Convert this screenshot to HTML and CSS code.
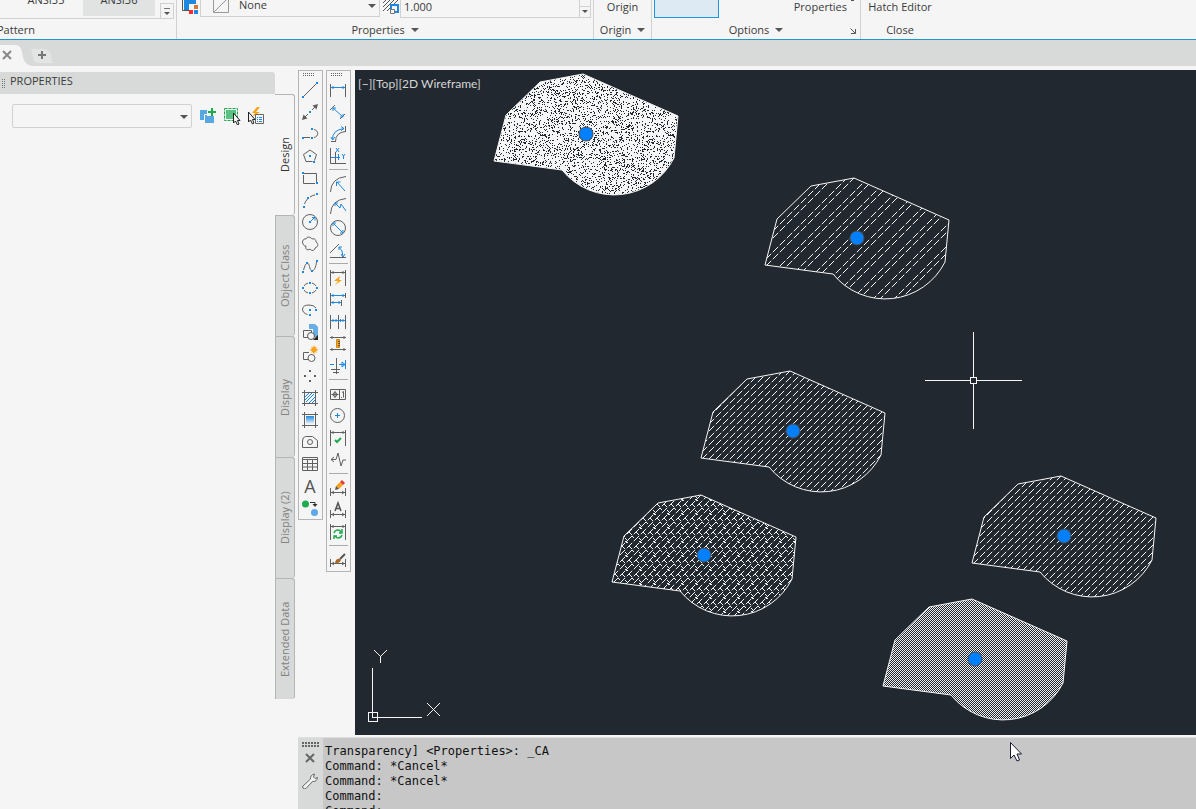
FILE: index.html
```html
<!DOCTYPE html>
<html lang="en">
<head>
<meta charset="utf-8">
<title>Hatch Editor</title>
<link rel="stylesheet" href="styles.css">
</head>
<body>
<header class="ribbon">
  <section class="panel panel-pattern">
    <div class="panel-row gallery">
      <button class="swatch">ANSI35</button>
      <button class="swatch swatch-hover">ANSI36</button>
      <button class="gallery-more" aria-label="More patterns"><i class="more-bar"></i><i class="caret caret-small"></i></button>
    </div>
    <h2 class="panel-title">Pattern</h2>
  </section>
  <section class="panel panel-properties">
    <div class="panel-row fields">
      <svg class="field-icon" width="18" height="18"><path fill="#1e88e0" d="M3 0h12v14H3z"/><path fill="none" stroke="#555" d="M1.500 0v14.500h8"/><path fill="#f5f5f5" d="M8 8h9v9H8z"/><path fill="#ff2a2a" d="M8 14h4v4H8z"/><path fill="#d57735" d="M13 9h4v4h-4z"/><path fill="#1e88e0" d="M13 14h4v4h-4z"/></svg>
      <label class="combo combo-color"><svg class="combo-none" width="16" height="16"><path fill="none" stroke="#999" d="M.5.5h15v15H.5zM1 15 15 1"/></svg>
        <select aria-label="Background color"><option>None</option></select></label>
      <svg class="field-icon" width="18" height="18"><path stroke="#555" d="M1 7 7 1M1 11 11 1M1 15 15 1M5 15 16 4"/><path fill="#f5f5f5" stroke="#1e88e0" stroke-width="2" d="M9 9h7v7H9z"/><path fill="#f5f5f5" stroke="#777" d="M8.500 13.500h4v4h-4z"/></svg>
      <div class="spin"><input type="text" value="1.000" aria-label="Hatch pattern scale"><span class="spin-buttons"><button aria-label="Increase"><i class="caret caret-up"></i></button><button aria-label="Decrease"><i class="caret caret-small"></i></button></span></div>
    </div>
    <h2 class="panel-title">Properties <i class="caret"></i></h2>
  </section>
  <section class="panel panel-origin">
    <div class="panel-row"><button class="big">Origin</button></div>
    <h2 class="panel-title">Origin <i class="caret"></i></h2>
  </section>
  <section class="panel panel-options">
    <div class="panel-row options-row">
      <button class="associative" aria-label="Associative"></button>
      <button class="big match">Properties<i class="match-caret"></i></button>
    </div>
    <h2 class="panel-title">Options <i class="caret"></i><button class="launcher" aria-label="Hatch settings"><svg width="6" height="6"><path fill="none" stroke="#555" d="M.5.5 5 5M5.500 1v4.500H1"/></svg></button></h2>
  </section>
  <section class="panel panel-close">
    <div class="panel-row"><button class="big">Hatch Editor</button></div>
    <h2 class="panel-title">Close</h2>
  </section>
</header>

<nav class="doc-tabs" aria-label="Drawings">
  <svg class="tab-shapes" width="60" height="26"><path fill="#f5f5f5" d="M0 5h15q6 0 7 7 1 9 5 12 3 2 6 2H0z"/><path fill="#e3e5e4" d="M31 9h13q6 0 7 6 0 6 2 8H39q-5 0-6-6-1-6-2-8z"/></svg>
  <button class="tab-button" aria-label="Close drawing"><svg width="10" height="10"><path stroke="#888" stroke-width="2" d="m1 1 8 8M9 1 1 9"/></svg></button>
  <button class="tab-button tab-new" aria-label="New drawing"><svg width="10" height="10"><path stroke="#777" stroke-width="2" d="M5 1v8M1 5h8"/></svg></button>
</nav>

<main class="workspace">
  <aside class="palette">
    <header class="palette-head"><i class="palette-grip"></i>PROPERTIES</header>
    <div class="palette-main">
      <div class="palette-body">
        <label class="combo combo-object"><select aria-label="Selected object"><option></option></select></label>
        <button class="palette-tool" aria-label="Toggle PICKADD"><svg width="18" height="18"><path fill="#56a8e2" d="M1 3h11v10H1z"/><path fill="#56a8e2" stroke="#f5f5f5" d="M5.500 7.500h10v9h-10z"/><path fill="#f5f5f5" d="M8 0h9v9H8z"/><path stroke="#17ad4b" stroke-width="2" d="M13 1v8M9 5h8"/></svg></button>
        <button class="palette-tool" aria-label="Select objects"><svg width="18" height="18"><path fill="#5bc183" d="M3 3h10v9H3z"/><path fill="none" stroke="#17ad4b" stroke-dasharray="3 1" d="M1.500 1.500h13v12h-13z"/><path fill="#f5f5f5" stroke="#222" d="M10.500 6v10l2-2 2 4 1.500-1-1.500-3.500H17z"/></svg></button>
        <button class="palette-tool" aria-label="Quick select"><svg width="18" height="18"><path fill="#f7a31c" d="m10 0-5 6h3L5 10l8-5h-4l4-5z"/><path fill="#f5f5f5" stroke="#666" d="M8.500 7.500h8v9h-8z"/><path stroke="#1e88e0" d="M10 10.500h1m1 0h3m-5 2h1m1 0h3m-5 2h1m1 0h3"/><path fill="#f5f5f5" stroke="#222" d="M1.500 5v10l2-2 2 4 1.500-1-1.500-3.500H8z"/></svg></button>
      </div>
      <div class="side-tabs" role="tablist">
        <button class="side-tab side-tab-active" role="tab" aria-selected="true">Design</button>
        <button class="side-tab" role="tab">Object Class</button>
        <button class="side-tab" role="tab">Display</button>
        <button class="side-tab" role="tab">Display (2)</button>
        <button class="side-tab" role="tab">Extended Data</button>
      </div>
    </div>
  </aside>

  <div class="stage">
    <div class="upper">
      <div class="toolbar" role="toolbar" aria-label="Draw">
        <i class="toolbar-grip"></i>
        <button aria-label="Line"><svg viewBox="0 0 16 16"><path class="g" d="M2 14 14 2"/><path class="b" d="M0 14h2v2H0zM14 0h2v2h-2z"/></svg></button>
        <button aria-label="Construction line"><svg viewBox="0 0 16 16"><path class="g" d="m2 14 4-4m4-4 4-4"/><path class="gf" d="m16 0-1.500 5.500-4-4zM0 16l1.500-5.500 4 4z"/><path class="b" d="M7 7h2v2H7z"/></svg></button>
        <button aria-label="Polyline"><svg viewBox="0 0 16 16"><path class="g" d="M2 11.500h6m4-8c5 1 5 7 0 8"/><path class="b" d="M0 11h2v2H0zM9 2h2v2H9zM9 11h2v2H9z"/></svg></button>
        <button aria-label="Polygon"><svg viewBox="0 0 16 16"><path class="g" d="M10.500 13.500H4L1.500 6.500 8 2l6.500 4.500-2 6"/><path class="b" d="M7 7h2v2H7zM11 13h2v2h-2z"/></svg></button>
        <button aria-label="Rectangle"><svg viewBox="0 0 16 16"><path class="g" d="M2 3.500h12.500V12M13 13.500H1.500V5"/><path class="b" d="M0 2h2v2H0zM14 12h2v2h-2z"/></svg></button>
        <button aria-label="Arc"><svg viewBox="0 0 16 16"><path class="g" d="M2.500 12q1-3 3-5M8 5q3-2 5-2"/><path class="b" d="M1 14h2v2H1zM5 5h2v2H5zM14 1h2v2h-2z"/></svg></button>
        <button aria-label="Circle"><svg viewBox="0 0 16 16"><circle class="g" cx="8" cy="8" r="7.500"/><path class="bs" d="M9 7 13 3M10 3.500h3v3"/><path class="b" d="M7 7h2v2H7z"/></svg></button>
        <button aria-label="Revision cloud"><svg viewBox="0 0 16 16"><path class="g" d="M2 9C-1 7 1 2 4 3c1-3 5-2 6 0 3-1 4 1 4 3 3 2 2 5-1 6 0 3-4 3-5 1-3 2-5 0-4-3-1 0-2 0-2-1z"/></svg></button>
        <button aria-label="Spline"><svg viewBox="0 0 16 16"><path class="g" d="M1.500 12Q3 6 5 5c3 0 2 7 5 8 2 0 4-4 4.500-9"/><path class="b" d="M0 13h2v2H0zM4 4h2v2H4zM9 12h2v2H9zM14 2h2v2h-2z"/></svg></button>
        <button aria-label="Ellipse"><svg viewBox="0 0 16 16"><path class="g" d="M2 6q1-2 4-3m4 0q3 1 4 3m0 4q-1 2-4 3m-4 0q-3-1-4-3"/><path class="b" d="M7 2h2v2H7zM14 7h2v2h-2zM7 12h2v2H7zM0 7h2v2H0z"/></svg></button>
        <button aria-label="Ellipse arc"><svg viewBox="0 0 16 16"><path class="g" d="M14 6Q12 3 7 3 1 3 .5 7q0 4 5 5.500"/><path class="b" d="M7 7h2v2H7zM13 7h2v2h-2zM7 12h2v2H7z"/></svg></button>
        <button aria-label="Insert block"><svg viewBox="0 0 16 16"><path fill="#67aee5" d="M7 0h6l3 3v10H7z"/><path fill="#f5f5f5" d="M0 5h11v10H0z"/><path class="g" d="M1.500 6.500h8v7h-8z"/><circle cx="9" cy="12" r="3.500" fill="#f5f5f5" stroke="#555"/><path fill="#222" d="m16 11v5h-5z"/></svg></button>
        <button aria-label="Create block"><svg viewBox="0 0 16 16"><path class="g" d="M7 6.500H1.500v7H7M9.500 8v1"/><circle class="g" cx="9.500" cy="12" r="3.500"/><path fill="#f7a31c" d="m12-1 1 2.500 2-1-1 2L16.500 4 14 5l1 2-2-1-1 2.500L11 6 9 7l1-2-2.500-1L10 2.500 9 .5l2 1z"/></svg></button>
        <button aria-label="Multiple points"><svg viewBox="0 0 16 16"><path class="gf" d="M7 2h2v2H7zM2 7h2v2H2zM12 7h2v2h-2zM7 12h2v2H7z"/></svg></button>
        <button aria-label="Hatch"><svg viewBox="0 0 16 16"><path class="bs" d="m3 7 4-4M3 10l7-7M4 12l8-8M7 13l6-6M10 13l3-3"/><path class="g" d="M0 2.500h16M0 13.500h16M2.500 0v16M13.500 0v16"/></svg></button>
        <button aria-label="Gradient"><svg viewBox="0 0 16 16"><defs><linearGradient id="fade" x2="0" y2="1"><stop stop-color="#1e88e0"/><stop offset="1" stop-color="#f5f5f5"/></linearGradient></defs><path fill="url(#fade)" d="M4 4h8v8H4z"/><path class="g" d="M0 2.500h16M0 13.500h16M2.500 0v16M13.500 0v16"/></svg></button>
        <button aria-label="Region"><svg viewBox="0 0 16 16"><path class="g" d="M.5 13.500V7q0-4 3-4.500h7l5 4v7z"/><circle class="g" cx="8" cy="8" r="2.500"/></svg></button>
        <button aria-label="Table"><svg viewBox="0 0 16 16"><path class="g" d="M.5 1.500h15v13H.5zM.5 3.500h15M.5 7.500h15M.5 11h15M5.500 4v10M10.500 4v10"/></svg></button>
        <button aria-label="Text" class="letter">A</button>
        <button aria-label="Add selected"><svg viewBox="0 0 16 16"><circle cx="3.500" cy="4" r="3.500" fill="#1cac4c"/><circle cx="12.500" cy="12.500" r="3.500" fill="#5da9e8"/><path stroke="#333" fill="none" d="M8 2.500h5V5"/><path fill="#333" d="M10.500 4h5L13 7z"/></svg></button>
      </div>
      <div class="toolbar" role="toolbar" aria-label="Dimension">
        <i class="toolbar-grip"></i>
        <button aria-label="Linear"><svg viewBox="0 0 16 16"><path class="g" d="M.5 2v13M15.500 2v13"/><path class="bs" d="M1 5.500h14M3 4v3M13 4v3"/></svg></button>
        <button aria-label="Aligned"><svg viewBox="0 0 16 16"><path class="g" d="m0 6 5-5M10 15l5-5"/><path class="bs" d="m3 4 10 9M3 7V4h3M10 13h3v-3"/></svg></button>
        <button aria-label="Arc length"><svg viewBox="0 0 16 16"><path class="g" d="M5.500 15.500q0-9 10-10M1 15.500h5M15.500 0v6"/><path class="bs" d="M2.500 14Q2 4 14 2.500M1 11l1.500 3L5 11M11 .5l3 2-3 2"/></svg></button>
        <button aria-label="Ordinate"><svg viewBox="0 0 16 16"><path class="g" d="M.5 0v15.500H16M5.500 4v11"/><path class="bs" d="M1 9.500h9M8.500 6v6M6 0l3 4m0-4L6 4M12 6l1.500 2L15 6m-1.500 2v3"/></svg></button>
        <hr>
        <button aria-label="Radius"><svg viewBox="0 0 16 16"><path class="g" d="M.5 16Q1 2 16 .5"/><path class="bs" d="m7 6 8 9M6.500 10V6h4"/></svg></button>
        <button aria-label="Jogged"><svg viewBox="0 0 16 16"><path class="g" d="M.5 16Q1 2 16 .5"/><path class="bs" d="m5 5 5 5 1-4 5 7M5 8V5h3"/></svg></button>
        <button aria-label="Diameter"><svg viewBox="0 0 16 16"><circle class="g" cx="8" cy="8" r="7.500"/><path class="bs" d="m3 3 10 10M3 6V3h3M10 13h3v-3"/></svg></button>
        <button aria-label="Angular"><svg viewBox="0 0 16 16"><path class="g" d="m0 11 9-9M0 15.500h16"/><path class="bs" d="M9 5q4 3 4 10M12 5H9v3M11 12l2 3 2-3"/></svg></button>
        <hr>
        <button aria-label="Quick dimension"><svg viewBox="0 0 16 16"><path class="g" d="M.5 0v16M15.500 0v16M1 2.500h14M3 1v3M13 1v3"/><path fill="#f7a31c" d="m10 6-6 5h4l-3 4 7-5H9z"/></svg></button>
        <button aria-label="Baseline"><svg viewBox="0 0 16 16"><path class="g" d="M.5 1v13M15.500 1v5M11.500 8v6"/><path class="bs" d="M1 3.500h14M1 10.500h10M3 2v3M13 2v3M3 9v3M9 9v3"/></svg></button>
        <button aria-label="Continue"><svg viewBox="0 0 16 16"><path class="g" d="M.5 1v14M8.500 1v14M15.500 1v14"/><path class="bs" d="M1 6.500h14M3 5v3M6 5v3M10.500 5v3M13 5v3"/></svg></button>
        <button aria-label="Dimension space"><svg viewBox="0 0 16 16"><path class="g" d="M0 1.500h16M0 13.500h16M2 0v3M14 0v3M2 12v3M14 12v3"/><path fill="#f7a31c" stroke="#d58612" d="M6.500 3.500h3v8h-3z"/><path stroke="#555" d="M8 5.500h2M8 7.500h2M8 9.500h2"/></svg></button>
        <button aria-label="Dimension break"><svg viewBox="0 0 16 16"><path class="g" d="M6.500 0v16M1 11.500h9M3 14.500h6"/><path class="bs" d="M0 6.500h4m5 0h6M12 4l3 2.500L12 9zM15.500 2v9"/></svg></button>
        <hr>
        <button aria-label="Tolerance"><svg viewBox="0 0 16 16"><path class="g" d="M.5 3.500h15v10H.5zM9.500 4v9"/><circle class="g" cx="5" cy="8.500" r="2"/><path class="g" d="M1.500 8.500h7M5 5v7M11 11.500h1M12 6.500l1.500-1v6"/></svg></button>
        <button aria-label="Center mark"><svg viewBox="0 0 16 16"><circle class="g" cx="7.500" cy="7.500" r="7"/><path class="bs" d="M5 7.500h5M7.500 5v5"/></svg></button>
        <button aria-label="Inspection"><svg viewBox="0 0 16 16"><path class="g" d="M.5 0v16M15.500 0v16M1 2.500h14M3 1v3M13 1v3"/><path fill="none" stroke="#1cac4c" stroke-width="2" d="m5 10 2 2 4-4"/></svg></button>
        <button aria-label="Jogged linear"><svg viewBox="0 0 16 16"><path class="g" d="M1 7.500h5L8 1l3 13 2-6h3M4 5 1 7.500 4 10"/></svg></button>
        <hr>
        <button aria-label="Dimension edit"><svg viewBox="0 0 16 16"><path class="g" d="M.5 8v8M15.500 8v8M1 12.500h14M4 11l-2 1.500L4 14M12 11l2 1.500-2 1.500"/><path fill="#f7a31c" d="m6 6 4-4 3 3-4 4z"/><path fill="#e43b36" d="m10 2 2-2 3 3-2 2z"/><path fill="#555" d="m6 6 3 3-4 1z"/></svg></button>
        <button aria-label="Dimension text edit"><svg viewBox="0 0 16 16"><path class="g" d="M.5 8v8M15.500 8v8M1 12.500h14M4 11l-2 1.500L4 14M12 11l2 1.500-2 1.500"/><path fill="none" stroke="#555" stroke-width="1.500" d="m5 9 3-8 3 8M6 6.500h4"/></svg></button>
        <button aria-label="Dimension update"><svg viewBox="0 0 16 16"><path class="g" d="M.5 0v16M15.500 0v16M1 2.500h14M3 1v3M13 1v3"/><path fill="none" stroke="#1cac4c" stroke-width="1.500" d="M4 9q1-3 4-3 2 0 3 2M12 5v4H9M12 11q-1 3-4 3-2 0-3-2M4 15v-3h3"/></svg></button>
        <hr>
        <button aria-label="Dimension style"><svg viewBox="0 0 16 16"><path class="g" d="M.5 7v8M15.500 7v8M1 11.500h14M4 10l-2 1.500L4 13M12 10l2 1.500-2 1.500"/><path fill="#a86a24" d="M5 11q1-5 5-4l1 1q-2 4-6 3z"/><path stroke="#555" stroke-width="2" d="m10 7 5-5"/></svg></button>
      </div>

      <div class="canvas">
        <svg class="model" shape-rendering="crispEdges" role="img" aria-label="Model space">
          <defs>
            <path id="region" d="M-3-60-46-52-80-19-92 27-24 36A67 67 0 0 0 88 24L92-18Z"/>
            <pattern id="sand" width="128" height="128" patternUnits="userSpaceOnUse"><path fill="#f5f5f5" d="M0 0h128v128H0z"/><path id="specks" fill="#212830"/></pattern>
            <pattern id="pairs" width="21" height="21" patternUnits="userSpaceOnUse"><path class="trace" d="M-1 22 22-1M-1 15 15-1M13 22l9-9"/><path class="dash" stroke-dasharray="7 3" d="M0 21 21 0M0 14 14 0M14 21l7-7"/></pattern>
            <pattern id="lines" width="14" height="14" patternUnits="userSpaceOnUse"><path class="trace" d="M-1 15 15-1M-1 8 8-1M6 15l9-9"/><path class="dash" stroke-dasharray="7 3" d="M0 14 14 0"/><path class="dash" d="M0 7l5-5M7 14l5-5"/></pattern>
            <pattern id="basket" width="14" height="14" patternUnits="userSpaceOnUse"><path class="trace" d="M-1 15 15-1M-1 8 8-1M6 15l9-9"/><path class="dash" d="m0 14 5-5M7 7l5-5M0 7l5-5M7 14l5-5M2 5l3 3M9 5l3 3M5 11l3 3M5 0l3 2M12 9l2 2"/></pattern>
            <pattern id="check" width="2" height="2" patternUnits="userSpaceOnUse"><path fill="#f0f0f0" d="M0 0h1v1H0zM1 1h1v1H1z"/></pattern>
          </defs>
          <g class="hatch" transform="translate(231 64)"><use href="#region" fill="url(#sand)"/><circle r="7"/></g>
          <g class="hatch" transform="translate(502 168)"><use href="#region" fill="url(#pairs)"/><circle r="7"/></g>
          <g class="hatch" transform="translate(438 361)"><use href="#region" fill="url(#lines)"/><circle r="7"/></g>
          <g class="hatch" transform="translate(349 485)"><use href="#region" fill="url(#basket)"/><circle r="7"/></g>
          <g class="hatch" transform="translate(709 466)"><use href="#region" fill="url(#lines)"/><circle r="7"/></g>
          <g class="hatch" transform="translate(620 589)"><use href="#region" fill="url(#check)"/><circle r="7"/></g>
          <path class="w" d="M570 310.500h45M622 310.500h45M618.500 262v45M618.500 314v45M615.500 307.500h6v6h-6z"/>
          <path class="w" d="M17.500 598v49.500H67M13.500 642.500h9v9h-9z"/>
          <path class="w" d="m19 580 6.500 6.500L32 580M25.500 586.500v6.500M72 633l13 13M85 633l-13 13"/>
        </svg>
        <div class="view-label">[−][Top][2D Wireframe]</div>
      </div>
    </div>

    <section class="command" aria-label="Command line">
      <div class="command-side">
        <i class="command-grip"></i>
        <button aria-label="Close command line"><svg width="10" height="10"><path stroke="#666" stroke-width="2" d="m1 1 8 8M9 1 1 9"/></svg></button>
        <button aria-label="Customize"><svg width="16" height="16"><path fill="#f0f0f0" stroke="#666" d="M1 13 8.500 6Q8 2 12.500 1l-1 3L13 5.500l2.500-1Q15 9 10.500 8.500L4 15.500q-2 1-3-.5-1-1 0-2z"/></svg></button>
      </div>
      <pre class="history">Transparency] &lt;Properties&gt;: _CA
Command: *Cancel*
Command: *Cancel*
Command:
Command:</pre>
      <svg class="pointer" width="12" height="20"><path fill="#fff" stroke="#1a1a35" d="M.5.5v16L4 13l3 6 2.500-1L7 12h4.500z"/></svg>
    </section>
  </div>
</main>
<script src="specks.js"></script>
</body>
</html>
```

FILE: styles.css
```css
* { box-sizing: border-box; }
body {
  margin: 0;
  height: 100vh;
  display: flex;
  flex-direction: column;
  overflow: hidden;
  background: #f5f5f5;
  color: #3b3b3b;
  font: 11px/16px "Open Sans", "Noto Sans", sans-serif;
}
button {
  padding: 0;
  border: 0;
  background: none;
  color: inherit;
  font: inherit;
}
svg { display: block; flex: none; }

/* Ribbon */
.ribbon {
  flex: none;
  display: flex;
  height: 40px;
  overflow: hidden;
  border-bottom: 1px solid #1e97cf;
}
.panel {
  flex: none;
  display: flex;
  flex-direction: column;
  border-right: 1px solid #d0d2d1;
}
.panel-pattern { width: 177px; }
.panel-properties { width: 417px; }
.panel-origin { width: 58px; }
.panel-options { width: 209px; }
.panel-close { width: 78px; border: 0; }
.panel-row {
  display: flex;
  align-items: flex-end;
  justify-content: center;
  height: 20px;
}
.panel-title {
  position: relative;
  display: flex;
  align-items: center;
  justify-content: center;
  gap: 6px;
  margin: 0;
  height: 19px;
  font-size: 11px;
  font-weight: 400;
}
.panel-pattern .panel-title { justify-content: flex-start; margin-left: -3px; }
.caret {
  border: 4px solid transparent;
  border-top-color: #555;
  border-bottom: 0;
}
.caret-small { border-width: 3px; border-bottom: 0; }
.caret-up { border-width: 3px; border-top: 0; border-bottom-color: #555; }
.big { height: 27px; }
.gallery {
  align-self: flex-start;
  justify-content: flex-start;
  width: 174px;
  height: 19px;
  margin-bottom: 1px;
  border-bottom: 1px solid #d0d2d1;
}
.swatch { width: 72px; height: 32px; margin-bottom: 2px; }
.swatch:first-child { margin-left: 9px; width: 74px; }
.swatch-hover { background: #e0e3e2; }
.gallery-more {
  display: flex;
  flex-direction: column;
  align-items: center;
  justify-content: center;
  gap: 2px;
  width: 14px;
  height: 15px;
  margin-left: auto;
  border: 1px solid #d0d2d1;
  border-bottom: 0;
}
.more-bar { width: 6px; height: 2px; border-top: 1px solid #777; }
.fields { justify-content: flex-start; padding: 0 2px 3px 4px; }
.field-icon { margin-bottom: 3px; }
.combo { position: relative; display: flex; }
.combo::after {
  content: "";
  position: absolute;
  right: 4px;
  top: 50%;
  margin-top: -1px;
  border: 4px solid transparent;
  border-top-color: #555;
  border-bottom: 0;
}
.combo select {
  appearance: none;
  width: 100%;
  border: 1px solid #d0d2d1;
  background: #f5f5f5;
  color: inherit;
  font: inherit;
}
.combo-color { width: 180px; height: 24px; margin: 0 2px 0 1px; }
.combo-color select { padding: 0 0 0 38px; }
.combo-none { position: absolute; left: 13px; bottom: 4px; }
.spin {
  display: flex;
  flex: 1;
  height: 22px;
  margin: 0 0 -1px 0;
  border: 1px solid #d0d2d1;
}
.spin input {
  flex: 1;
  min-width: 0;
  padding: 0 3px;
  border: 0;
  background: none;
  color: inherit;
  font: inherit;
}
.spin-buttons { display: grid; width: 11px; }
.spin-buttons button {
  display: flex;
  align-items: center;
  justify-content: center;
  border: 1px solid #d0d2d1;
  border-width: 1px 0 0 1px;
}
.options-row { justify-content: space-between; padding: 0 8px 0 2px; }
.associative {
  width: 65px;
  height: 30px;
  margin-bottom: 2px;
  border: 1px solid #1e97e0;
  background: #dde9f3;
}
.match { display: flex; align-items: center; gap: 4px; margin-right: -2px; }
.match-caret { width: 3px; height: 2px; margin-bottom: 13px; background: #555; }
.launcher { position: absolute; right: 4px; bottom: 5px; }

/* Drawing tabs */
.doc-tabs {
  position: relative;
  flex: none;
  display: flex;
  align-items: center;
  gap: 25px;
  height: 26px;
  padding: 4px 0 0 2px;
  background: #d7dad9;
}
.tab-shapes { position: absolute; left: 0; top: 0; }
.tab-button { position: relative; }

/* Properties palette */
.workspace { flex: 1; display: flex; min-height: 0; }
.palette { flex: none; display: flex; flex-direction: column; width: 298px; padding-top: 6px; }
.palette-head {
  display: flex;
  align-items: center;
  gap: 5px;
  width: 275px;
  height: 22px;
  padding: 0 0 4px 1px;
  border-radius: 0 3px 0 0;
  background: #d7dad9;
}
.palette-grip {
  width: 4px;
  height: 9px;
  margin-top: 5px;
  background: repeating-conic-gradient(#777 0 25%, transparent 0 100%) 0 0 / 2px 2px;
}
.palette-main { flex: 1; display: flex; }
.palette-body {
  flex: none;
  display: flex;
  align-items: flex-start;
  width: 275px;
  padding: 10px 0 0 12px;
}
.combo-object { width: 180px; height: 24px; margin-right: 7px; }
.combo-object select { border-radius: 2px; }
.palette-tool { width: 24px; padding-top: 3px; }
.side-tabs { width: 20px; }
.side-tab {
  display: flex;
  align-items: center;
  justify-content: center;
  width: 20px;
  height: 121px;
  border: 1px solid #b3b6b5;
  border-top-width: 0;
  border-radius: 3px 0 0 3px;
  background: #d7dad9;
  color: #828282;
  writing-mode: vertical-rl;
  transform: rotate(180deg);
}
.side-tab-active {
  border-width: 0 0 1px 1px;
  background: #f5f5f5;
  color: #333;
}

/* Toolbars */
.stage { flex: 1; display: flex; flex-direction: column; min-width: 0; }
.upper { flex: 1; display: flex; align-items: flex-start; min-height: 0; padding-top: 4px; }
.toolbar {
  flex: none;
  display: flex;
  flex-direction: column;
  align-items: flex-start;
  width: 25px;
  margin-right: 3px;
  border: 1px solid #b5b5b5;
}
.toolbar-grip {
  width: 13px;
  height: 4px;
  margin: 2px 0 2px 3px;
  background: repeating-conic-gradient(#666 0 25%, transparent 0 100%) 0 0 / 2px 2px;
}
.toolbar button {
  display: flex;
  align-items: center;
  justify-content: center;
  width: 22px;
  height: 22px;
}
.toolbar svg { width: 16px; height: 16px; overflow: visible; }
.toolbar .letter { color: #555; font-size: 18px; }
.toolbar hr { width: 19px; height: 1px; margin: 2px 0 3px 2px; border: 0; background: #aaa; }
.g { fill: none; stroke: #606060; }
.gf { fill: #606060; }
.b { fill: #1e88e0; }
.bs { fill: none; stroke: #1e88e0; }

/* Model space */
.canvas {
  position: relative;
  flex: 1;
  align-self: stretch;
  margin-left: 1px;
  overflow: hidden;
  background: #212830;
}
.model { width: 100%; height: 100%; }
.hatch use { stroke: #f5f5f5; shape-rendering: auto; }
.hatch circle { fill: #007fff; stroke: #4b4b4b; stroke-width: 1; shape-rendering: auto; }
.dash, .w { fill: none; stroke: #f5f5f5; }
.trace { fill: none; stroke: #4a5058; }
.view-label {
  position: absolute;
  left: 3px;
  top: 6px;
  color: #d5d5d5;
  font: 12px/16px Lato, sans-serif;
}

/* Command line */
.command {
  position: relative;
  flex: none;
  display: flex;
  height: 72px;
  margin-top: 2px;
  border-top: 1px solid #dedede;
  background: #c7c7c7;
}
.command-side {
  display: flex;
  flex-direction: column;
  align-items: flex-start;
  gap: 10px;
  width: 25px;
  padding: 4px 0 0 4px;
  background: #d7dad9;
}
.command-side button { width: 16px; display: flex; justify-content: center; }
.command-grip {
  width: 17px;
  height: 5px;
  margin-bottom: -4px;
  background:
    linear-gradient(90deg, #666 2px, transparent 2px) 0 0 / 3px 2px repeat-x,
    linear-gradient(90deg, #666 2px, transparent 2px) 0 3px / 3px 2px repeat-x;
}
.history {
  margin: 0;
  padding: 6px 2px 0;
  color: #111;
  font: 12px/15px "DejaVu Sans Mono", monospace;
}
.pointer { position: absolute; left: 712px; top: 4px; }
```

FILE: specks.js
```js
// Fills the sand tile with evenly scattered one-pixel grains.
(function () {
  var seed = 7, d = '';
  function next() {
    seed = (seed * 16807) % 2147483647;
    return seed / 2147483647;
  }
  for (var y = 0; y < 128; y++) {
    for (var x = 0; x < 128; x++) {
      if (next() < 0.2) d += 'M' + x + ' ' + y + 'h1v1h-1z';
    }
  }
  document.getElementById('specks').setAttribute('d', d);
})();
```
